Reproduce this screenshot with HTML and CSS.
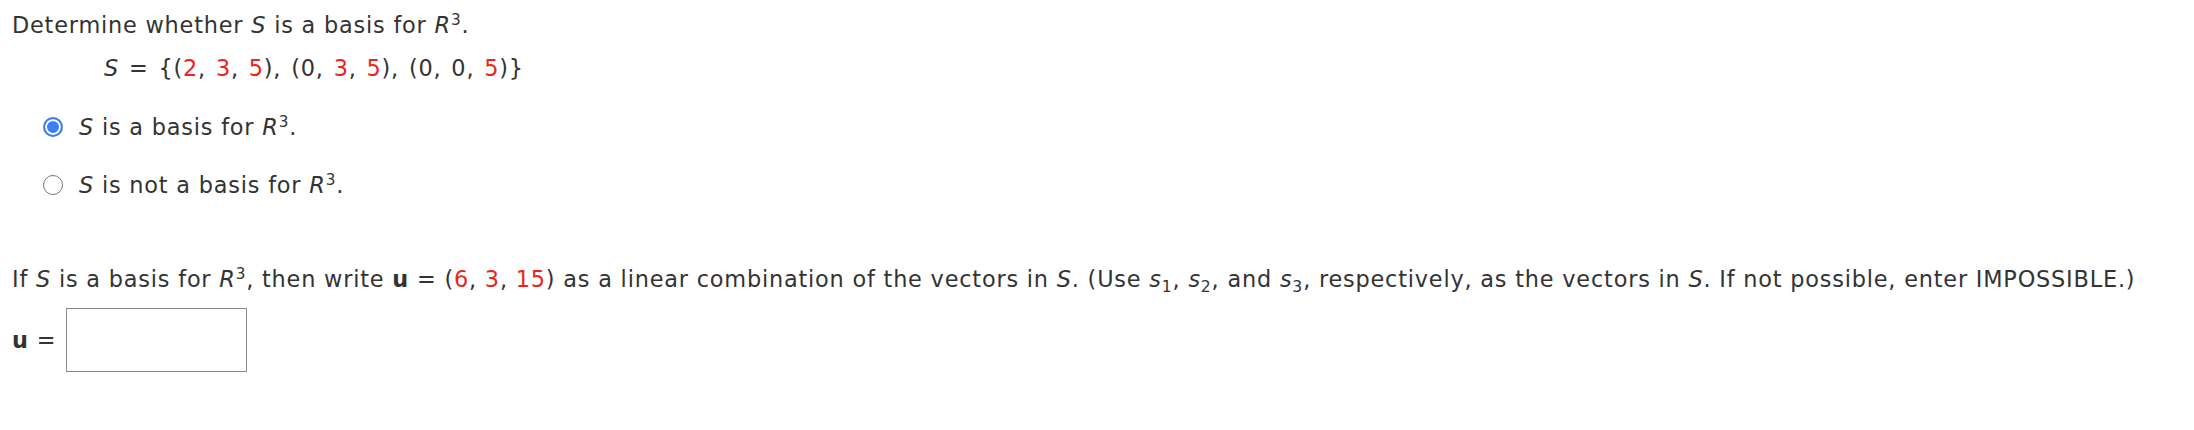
FILE: index.html
```html
<!DOCTYPE html>
<html lang="en">
    <head>
        <title>Basis question</title>
        <link rel="stylesheet" href="styles.css">
    </head>
    <body>
<div class="question">
    <p class="line first">Determine whether <i>S</i> is a basis for <i>R</i><sup>3</sup>.</p>
    <p class="line set"><i>S</i> = {(<span class="red">2</span>, <span class="red">3</span>, <span class="red">5</span>), (0, <span class="red">3</span>, <span class="red">5</span>), (0, 0, <span class="red">5</span>)}</p>
    <ul class="choices">
        <li class="line"><span class="radio checked"></span><span><i>S</i> is a basis for <i>R</i><sup>3</sup>.</span></li>
        <li class="line"><span class="radio"></span><span><i>S</i> is not a basis for <i>R</i><sup>3</sup>.</span></li>
    </ul>
    <p class="line second">If <i>S</i> is a basis for <i>R</i><sup>3</sup>, then write <b>u</b> = (<span class="red">6</span>, <span class="red">3</span>, <span class="red">15</span>) as a linear combination of the vectors in <i>S</i>. (Use <i>s</i><sub>1</sub>, <i>s</i><sub>2</sub>, and <i>s</i><sub>3</sub>, respectively, as the vectors in <i>S</i>. If not possible, enter IMPOSSIBLE.)</p>
    <div class="answer">
        <span class="label"><b>u</b> =</span>
        <span class="box"></span>
    </div>
</div>
    </body>
</html>
```

FILE: styles.css
```css
body {
    margin: 0;
    background: #fff;
    color: #333;
    font-family: Verdana, "DejaVu Sans", sans-serif;
    font-size: 22.4px;
    letter-spacing: 0.8px;
}
.question {
    padding: 9px 0 0 12px;
}
.line {
    margin: 0;
    line-height: 32px;
    white-space: nowrap;
}
.red { color: #e8261c; }
sup, sub { line-height: 0; }
sup { font-size: 0.68em; vertical-align: 8px; }
sub { font-size: 0.7em; vertical-align: -0.3em; }
.set {
    margin-top: 11px;
    padding-left: 92px;
    word-spacing: 2px;
}
.choices {
    list-style: none;
    margin: 27px 0 0 0;
    padding: 0 0 0 31px;
    display: flex;
    flex-direction: column;
    gap: 26px;
}
.choices li {
    display: flex;
    align-items: center;
    gap: 16px;
}
.radio {
    box-sizing: border-box;
    width: 20px;
    height: 20px;
    border-radius: 50%;
    border: 1.5px solid #767676;
    background: #fff;
}
.radio.checked {
    border: 2px solid #3b7ff5;
    background: #3b7ff5;
    box-shadow: inset 0 0 0 2px #fff;
}
.second {
    margin-top: 62px;
}
.answer {
    display: flex;
    align-items: center;
    gap: 10px;
    margin-top: 13px;
}
.answer .label { line-height: 32px; }
.box {
    box-sizing: border-box;
    width: 181px;
    height: 64px;
    border: 1.5px solid #8a8a8a;
    background: #fff;
}
```
